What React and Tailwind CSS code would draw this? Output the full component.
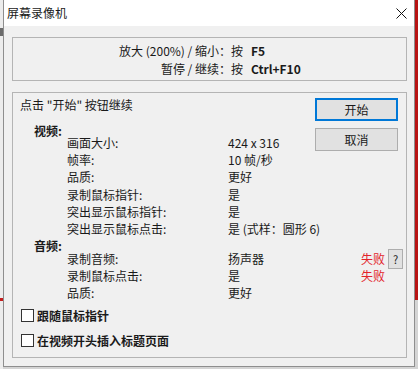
import React from "react";

const videoRows = [
    ["画面大小:", "424 x 316"],
    ["帧率:", "10 帧/秒"],
    ["品质:", "更好"],
    ["录制鼠标指针:", "是"],
    ["突出显示鼠标指针:", "是"],
    ["突出显示鼠标点击:", "是 (式样：圆形 6)"],
];

const audioRows = [
    ["录制音频:", "扬声器", "失败", true],
    ["录制鼠标点击:", "是", "失败", false],
    ["品质:", "更好", "", false],
];

const Row = ({ label, value, status, help }) => (
    <div className="flex h-[17.2px] items-center whitespace-nowrap">
        <span className="w-[161px] shrink-0 pl-[54px] box-content">{label}</span>
        <span className="w-[133px] shrink-0">{value}</span>
        {status && <span className="w-[27px] shrink-0 text-[#e3232a]">{status}</span>}
        {help && (
            <button className="flex h-[20px] w-[15px] shrink-0 items-center justify-center border border-[#adadad] bg-[#e1e1e1] text-[11px]">
                ?
            </button>
        )}
    </div>
);

const Check = ({ text }) => (
    <div className="flex h-[20px] items-center pl-[8px]">
        <span className="h-[13px] w-[13px] border border-[#333] bg-white" />
        <span className="ml-[3px] font-bold">{text}</span>
    </div>
);

const App = () => {
    return (
        <div
            className="flex h-[369px] w-[418px] overflow-hidden bg-[#d4d4d4] text-[12px] text-[#1a1a1a]"
            style={{ fontFamily: '"Noto Sans CJK SC", "Noto Sans", sans-serif' }}
        >
            {/* background peeking on the left */}
            <div className="flex w-[3px] flex-col bg-[#ececec]">
                <div className="mt-[28px] h-[8px] bg-[#6b6b6b]" />
                <div className="mt-[262px] h-[3px] bg-[#c41e1e]" />
            </div>

            {/* dialog */}
            <div className="flex h-[367px] w-[412px] flex-col border-x border-b border-[#8e8e8e]">
                {/* title bar */}
                <div className="flex h-[26px] items-center justify-between bg-white pl-[3px] pr-[7px]">
                    <span>屏幕录像机</span>
                    <svg width="11" height="11" viewBox="0 0 11 11">
                        <path d="M0.5 0.5 L10.5 10.5 M10.5 0.5 L0.5 10.5" stroke="#111" strokeWidth="1" />
                    </svg>
                </div>

                {/* body */}
                <div className="flex-1 bg-[#f0f0f0] pl-[8px] pr-[7px] pt-[11px]">
                    {/* hotkeys */}
                    <div className="h-[44px] border border-[#b4b4b4] pt-[4px]">
                        <div className="grid grid-cols-[230px_auto] gap-x-[8px] leading-[18px]">
                            <span className="text-right">放大 (200%) / 缩小：按</span>
                            <span className="font-bold">F5</span>
                            <span className="text-right">暂停 / 继续：按</span>
                            <span className="font-bold">Ctrl+F10</span>
                        </div>
                    </div>

                    {/* settings */}
                    <div className="mt-[11px] h-[266px] border border-[#b4b4b4]">
                        <div className="flex">
                            <div className="min-w-0 flex-1">
                                <div className="pl-[7px] pt-[4px] leading-[16px]">点击 "开始" 按钮继续</div>
                                <div className="mt-[12.5px] h-[9px] pl-[21px] font-bold leading-[9px]">视频:</div>
                                {videoRows.slice(0, 2).map(([l, v]) => (
                                    <Row key={l} label={l} value={v} />
                                ))}
                            </div>
                            <div className="mr-[8px] mt-[5px] flex w-[83px] shrink-0 flex-col gap-[7px]">
                                <button className="h-[23px] border-2 border-[#0078d7] bg-[#e1e1e1]">开始</button>
                                <button className="h-[23px] border border-[#adadad] bg-[#e1e1e1]">取消</button>
                            </div>
                        </div>
                        {videoRows.slice(2).map(([l, v]) => (
                            <Row key={l} label={l} value={v} />
                        ))}

                        <div className="mt-[3.8px] h-[9px] pl-[21px] font-bold leading-[9px]">音频:</div>
                        {audioRows.map(([l, v, s, h]) => (
                            <Row key={l + v} label={l} value={v} status={s} help={h} />
                        ))}

                        <div className="mt-[4px] flex flex-col gap-[5px]">
                            <Check text="跟随鼠标指针" />
                            <Check text="在视频开头插入标题页面" />
                        </div>
                    </div>
                </div>
            </div>

            {/* background peeking on the right */}
            <div className="flex w-[3px] flex-col">
                <div className="h-[300px] bg-[#b81414]" />
            </div>
        </div>
    );
};

export default App;
